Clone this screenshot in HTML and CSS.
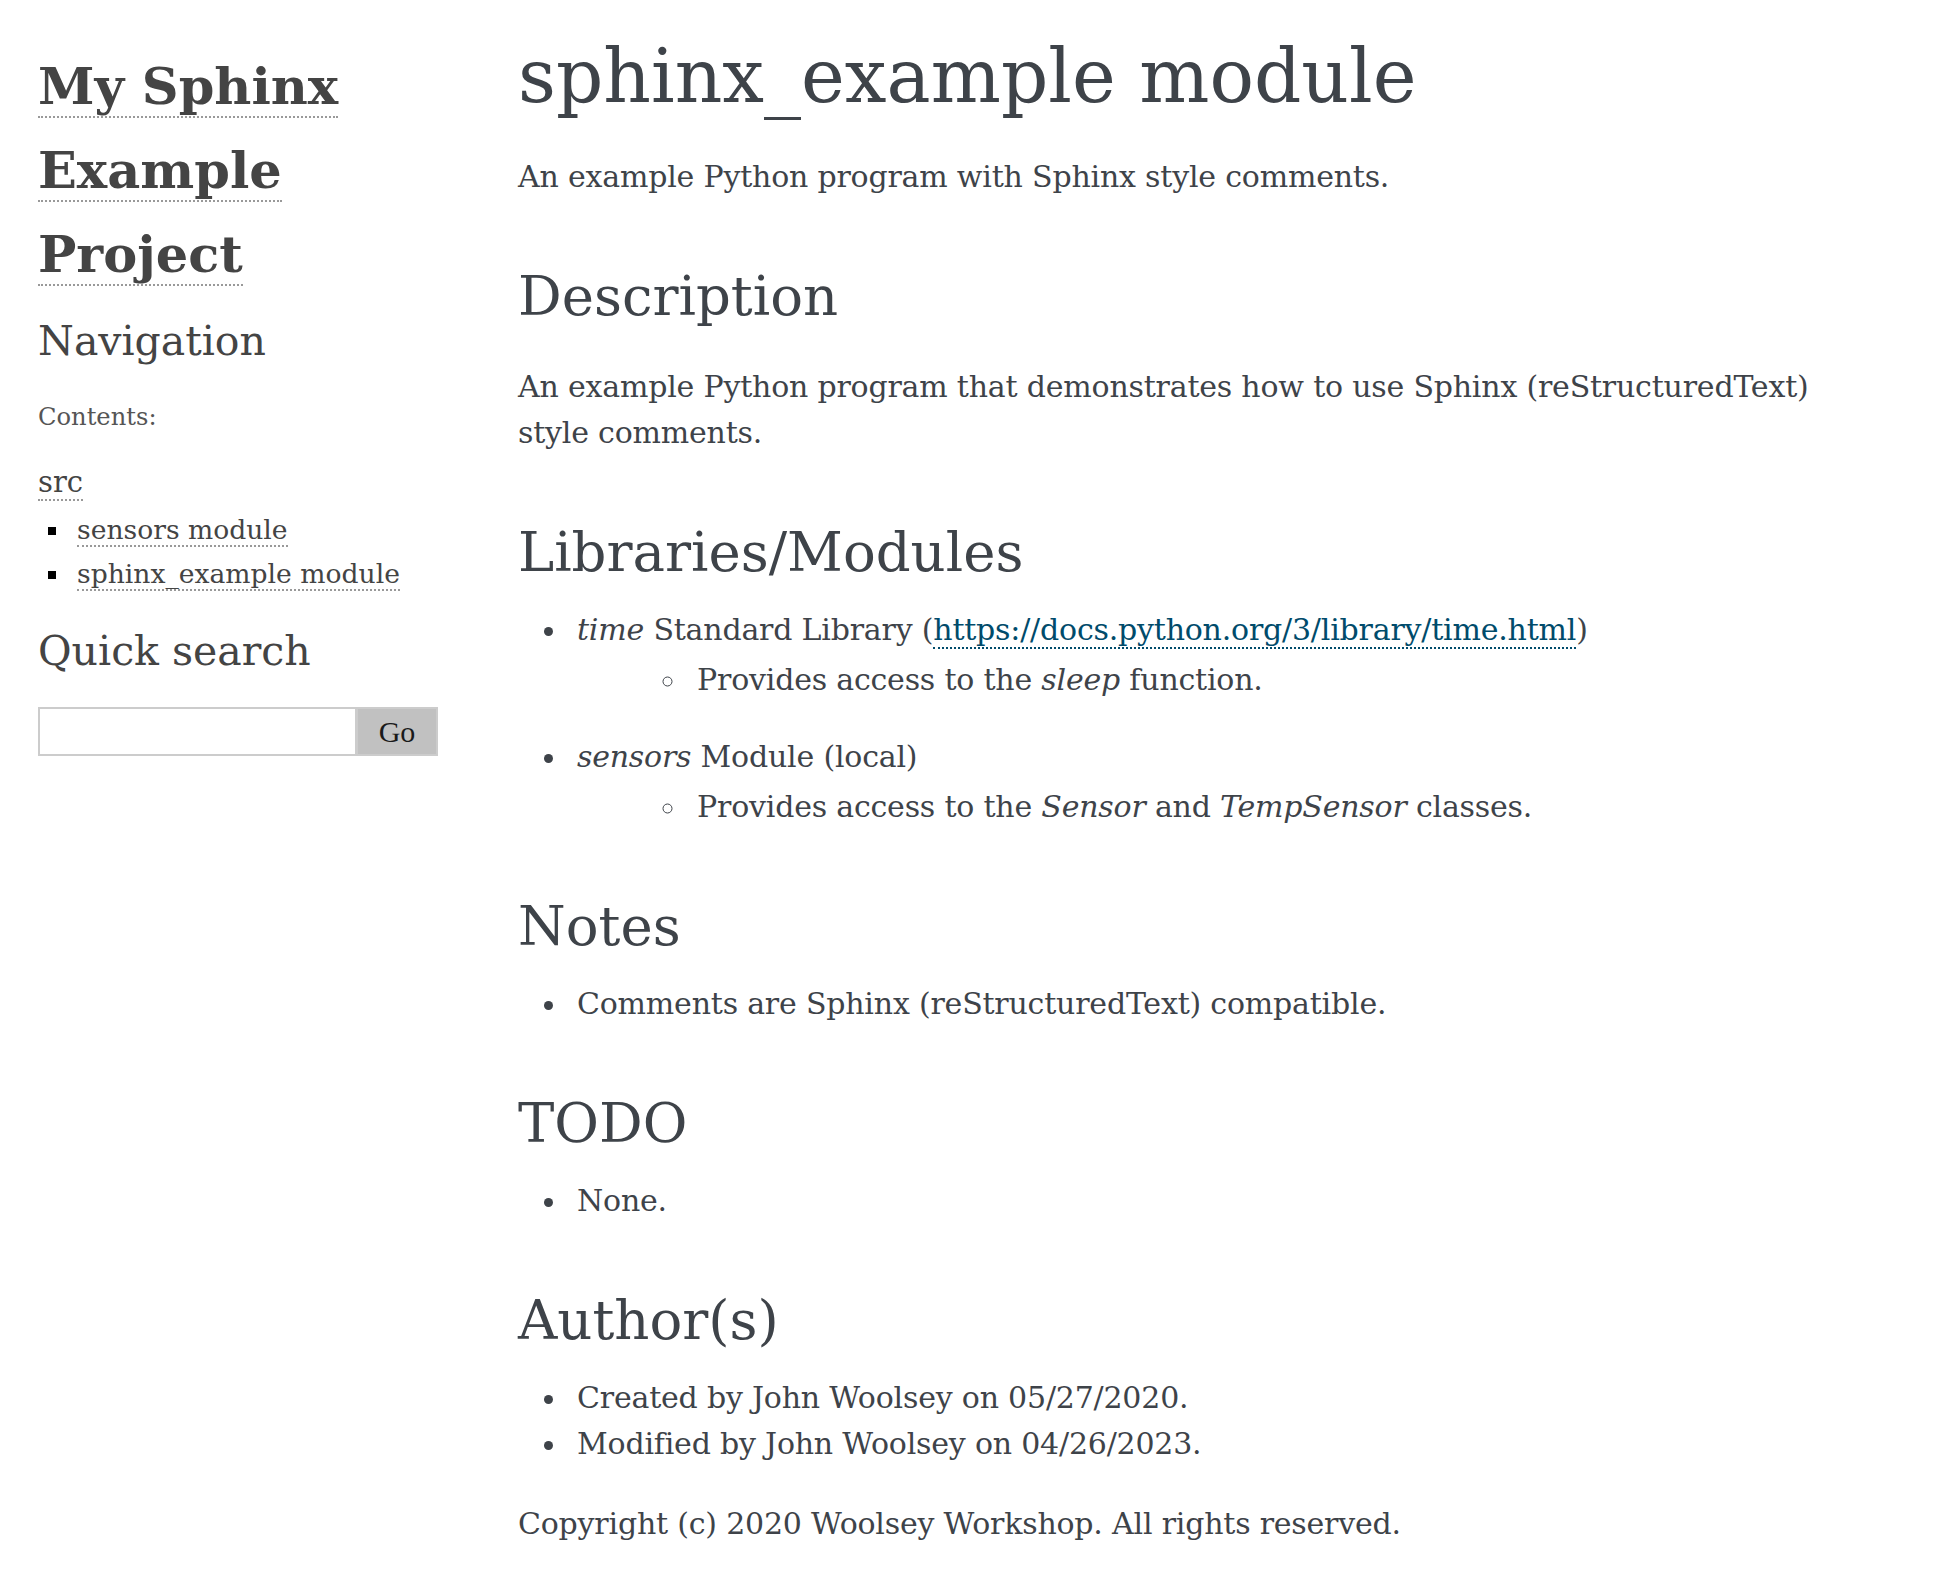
FILE: index.html
```html
<!DOCTYPE html>
<html lang="en">
<head>
<meta charset="utf-8">
<title>sphinx_example module — My Sphinx Example Project</title>
<link rel="stylesheet" href="styles.css">
</head>
<body>
<div class="document">
  <aside class="sidebar">
    <h1 class="logo"><a class="logo-link" href="#">My Sphinx Example Project</a></h1>
    <h3 class="side-heading">Navigation</h3>
    <p class="caption">Contents:</p>
    <ul class="toc">
      <li class="toc-l1"><a class="side-link" href="#">src</a>
        <ul class="toc-sub">
          <li class="toc-l2"><a class="side-link" href="#">sensors module</a></li>
          <li class="toc-l2"><a class="side-link" href="#">sphinx_example module</a></li>
        </ul>
      </li>
    </ul>
    <h3 class="side-heading search-heading">Quick search</h3>
    <form class="search" action="#">
      <input class="search-input" type="text" aria-label="search">
      <input class="search-btn" type="submit" value="Go">
    </form>
  </aside>
  <main class="body">
    <h1 class="title">sphinx_example module</h1>
    <p class="intro">An example Python program with Sphinx style comments.</p>

    <h2 class="section-title">Description</h2>
    <p class="para">An example Python program that demonstrates how to use Sphinx (reStructuredText) style comments.</p>

    <h2 class="section-title">Libraries/Modules</h2>
    <ul class="list">
      <li class="item"><p class="item-p"><em>time</em> Standard Library (<a class="ref" href="#">https://docs.python.org/3/library/time.html</a>)</p>
        <ul class="sublist"><li class="subitem">Provides access to the <em>sleep</em> function.</li></ul>
      </li>
      <li class="item item-gap"><p class="item-p"><em>sensors</em> Module (local)</p>
        <ul class="sublist"><li class="subitem">Provides access to the <em>Sensor</em> and <em>TempSensor</em> classes.</li></ul>
      </li>
    </ul>

    <h2 class="section-title">Notes</h2>
    <ul class="list">
      <li class="item">Comments are Sphinx (reStructuredText) compatible.</li>
    </ul>

    <h2 class="section-title">TODO</h2>
    <ul class="list">
      <li class="item">None.</li>
    </ul>

    <h2 class="section-title">Author(s)</h2>
    <ul class="list">
      <li class="item">Created by John Woolsey on 05/27/2020.</li>
      <li class="item">Modified by John Woolsey on 04/26/2023.</li>
    </ul>

    <p class="copyright">Copyright (c) 2020 Woolsey Workshop. All rights reserved.</p>
  </main>
</div>
</body>
</html>
```

FILE: styles.css
```css
html, body {
  margin: 0;
  padding: 0;
  background: #ffffff;
}

body {
  font-family: "DejaVu Serif", "Liberation Serif", serif;
  color: #3e4349;
}

.document {
  display: flex;
  align-items: flex-start;
  padding-left: 18px;
}

/* ---------- sidebar ---------- */
.sidebar {
  flex: none;
  width: 440px;
  box-sizing: border-box;
  padding: 44px 20px 0 20px;
  color: #444;
  font-size: 24px;
  line-height: 38px;
}

.logo {
  margin: 0;
  font-size: 51px;
  line-height: 84px;
  font-weight: bold;
}

.logo-link,
.side-link {
  color: #444;
  text-decoration: none;
  border-bottom: 2px dotted #999;
}

.side-heading {
  margin: 12px 0 0 0;
  font-size: 41px;
  line-height: 66px;
  font-weight: normal;
  color: #444;
}

.caption {
  margin: 24px 0 0 0;
  color: #555;
  font-size: 24.2px;
  line-height: 38px;
}

.toc {
  list-style: none;
  margin: 24px 0 0 0;
  padding: 0;
  color: #000;
}

.toc-l1 {
  font-size: 29px;
  line-height: 44px;
}

.toc-sub {
  list-style: square;
  margin: 4px 0 0 0;
  padding-left: 33px;
}

.toc-l2 {
  padding-left: 6px;
  font-size: 26.6px;
  line-height: 44px;
}

.search-heading {
  margin-top: 22px;
}

.search {
  display: flex;
  margin: 23px 0 0 0;
}

.search-input {
  width: 319px;
  height: 49px;
  box-sizing: border-box;
  margin: 0;
  padding: 0 6px;
  border: 2px solid #ccc;
  background: #fff;
  font-family: "DejaVu Serif", serif;
  font-size: 24px;
  outline: none;
}

.search-btn {
  width: 81px;
  height: 49px;
  box-sizing: border-box;
  margin: 0;
  padding: 0;
  border: 2px solid #ccc;
  border-left-width: 1px;
  background: #c1c1c1;
  color: #1a1a1a;
  font-family: "Liberation Serif", serif;
  font-size: 30px;
}

/* ---------- body ---------- */
.body {
  flex: none;
  width: 1320px;
  padding: 30px 0 40px 60px;
  font-size: 30px;
  letter-spacing: -0.2px;
  line-height: 46px;
  color: #3e4349;
}

.title {
  margin: 0;
  font-size: 74px;
  line-height: 92px;
  font-weight: normal;
  letter-spacing: 0;
}

.intro {
  margin: 32px 0 0 0;
}

.section-title {
  margin: 61px 0 0 0;
  font-size: 54.5px;
  line-height: 70px;
  font-weight: normal;
  letter-spacing: 0;
}

.para {
  margin: 33px 0 0 0;
}

.list {
  margin: 20px 0 0 0;
  padding-left: 51px;
  list-style: disc;
}

.item {
  padding-left: 8px;
}

.item-p {
  margin: 0;
}

.sublist {
  margin: 4px 0 0 0;
  padding-left: 111px;
  list-style: circle;
}

.subitem {
  padding-left: 9px;
}

.item-gap {
  margin-top: 31px;
}

.ref {
  color: #004b6b;
  text-decoration: none;
  border-bottom: 2px dotted #004b6b;
}

.copyright {
  margin: 34px 0 0 0;
}
```
